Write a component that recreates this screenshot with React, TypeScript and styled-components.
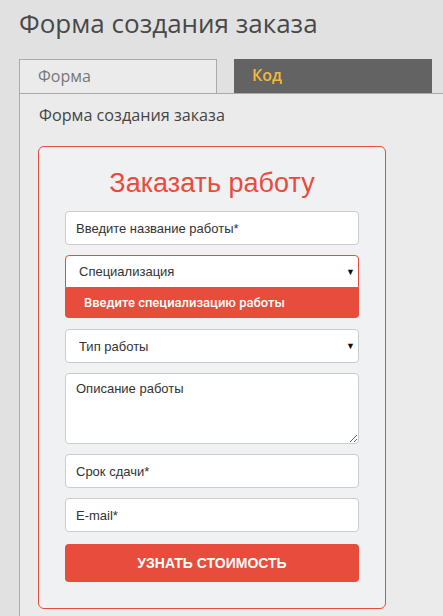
import React from "react";
import styled, { createGlobalStyle } from "styled-components";

const GlobalStyle = createGlobalStyle`
  body {
    margin: 0;
    background-color: #e1e1e1;
    overflow: hidden;
  }
`;

const red = "#e74c3c";

function App() {
  return (
    <>
      <GlobalStyle />
      <Page>
        <Title>Форма создания заказа</Title>
        <Tabs>
          <Tab active>Форма</Tab>
          <Tab>Код</Tab>
        </Tabs>
        <Panel>
          <PanelTitle>Форма создания заказа</PanelTitle>
          <Card>
            <CardTitle>Заказать работу</CardTitle>
            <Fields>
              <Input type="text" placeholder="Введите название работы*" />
              <ErrorGroup>
                <SelectWrap>
                  <Select invalid defaultValue="">
                    <option value="">Специализация</option>
                  </Select>
                  <Arrow>▼</Arrow>
                </SelectWrap>
                <ErrorText>Введите специализацию работы</ErrorText>
              </ErrorGroup>
              <SelectWrap>
                <Select defaultValue="">
                  <option value="">Тип работы</option>
                </Select>
                <Arrow>▼</Arrow>
              </SelectWrap>
              <TextArea placeholder="Описание работы" />
              <Input type="text" placeholder="Срок сдачи*" />
              <Input type="text" placeholder="E-mail*" />
              <SubmitButton>Узнать стоимость</SubmitButton>
            </Fields>
          </Card>
        </Panel>
      </Page>
    </>
  );
}

const Page = styled.div`
  padding-left: 19px;
  font-family: "Open Sans", sans-serif;
`;

const Title = styled.h1`
  margin: 0;
  padding-top: 6px;
  font-size: 26px;
  font-weight: normal;
  line-height: 34px;
  color: #484848;
`;

const Tabs = styled.div`
  display: flex;
  gap: 17px;
  margin-top: 19px;
`;

const Tab = styled.div<{ active?: boolean }>`
  box-sizing: border-box;
  width: 198px;
  height: 34px;
  line-height: 33px;
  padding-left: 18px;
  font-size: 16px;
  font-weight: ${(p) => (p.active ? "normal" : 600)};
  color: ${(p) => (p.active ? "#777777" : "#f5b83d")};
  background-color: ${(p) => (p.active ? "#ebebeb" : "#636363")};
  border: ${(p) => (p.active ? "1px solid #aaaaaa" : "none")};
  border-bottom: none;
`;

const Panel = styled.div`
  width: 460px;
  background-color: #ebebeb;
  border-top: 1px solid #aaaaaa;
  border-left: 1px solid #aaaaaa;
  padding: 10px 18px 40px;
`;

const PanelTitle = styled.div`
  font-size: 16.2px;
  line-height: 22px;
  color: #454545;
  padding-left: 1px;
`;

const Card = styled.div`
  box-sizing: border-box;
  width: 348px;
  margin-top: 20px;
  padding: 20px 26px 26px;
  background-color: #f0f1f3;
  border: 1px solid ${red};
  border-radius: 6px;
  font-family: "Liberation Sans", Arial, sans-serif;
`;

const CardTitle = styled.div`
  margin-bottom: 12px;
  text-align: center;
  font-size: 27px;
  line-height: 32px;
  color: ${red};
`;

const Fields = styled.div`
  display: flex;
  flex-direction: column;
  gap: 10px;
`;

const fieldBase = `
  box-sizing: border-box;
  width: 100%;
  margin: 0;
  background-color: #ffffff;
  border: 1px solid #cccccc;
  border-radius: 4px;
  font-family: "Liberation Sans", Arial, sans-serif;
  font-size: 13px;
  color: #333333;
  outline: none;
  &::placeholder {
    color: #333333;
    opacity: 1;
  }
`;

const Input = styled.input`
  ${fieldBase}
  height: 34px;
  padding: 0 10px;
`;

const TextArea = styled.textarea`
  ${fieldBase}
  display: block;
  height: 71px;
  padding: 7px 10px;
  line-height: 15px;
`;

const SelectWrap = styled.div`
  position: relative;
`;

const Select = styled.select<{ invalid?: boolean }>`
  ${fieldBase}
  display: block;
  height: ${(p) => (p.invalid ? "33px" : "34px")};
  padding: 0 24px 0 13px;
  appearance: none;
  border-color: ${(p) => (p.invalid ? red : "#cccccc")};
  border-radius: ${(p) => (p.invalid ? "4px 4px 0 0" : "4px")};
`;

const Arrow = styled.span`
  position: absolute;
  right: 4px;
  top: 50%;
  transform: translateY(-50%);
  font-size: 9px;
  color: #111111;
  pointer-events: none;
`;

const ErrorGroup = styled.div`
  margin-bottom: 1px;
`;

const ErrorText = styled.div`
  height: 30px;
  line-height: 29px;
  padding-left: 19px;
  background-color: ${red};
  border-radius: 0 0 4px 4px;
  font-family: Roboto, "Open Sans", sans-serif;
  font-size: 13px;
  font-weight: 500;
  color: #ffffff;
`;

const SubmitButton = styled.button`
  height: 38px;
  margin-top: 2px;
  background-color: ${red};
  border: none;
  border-radius: 4px;
  font-family: "Liberation Sans", Arial, sans-serif;
  font-size: 14px;
  font-weight: bold;
  text-transform: uppercase;
  color: #ffffff;
  cursor: pointer;
`;

export default App;
